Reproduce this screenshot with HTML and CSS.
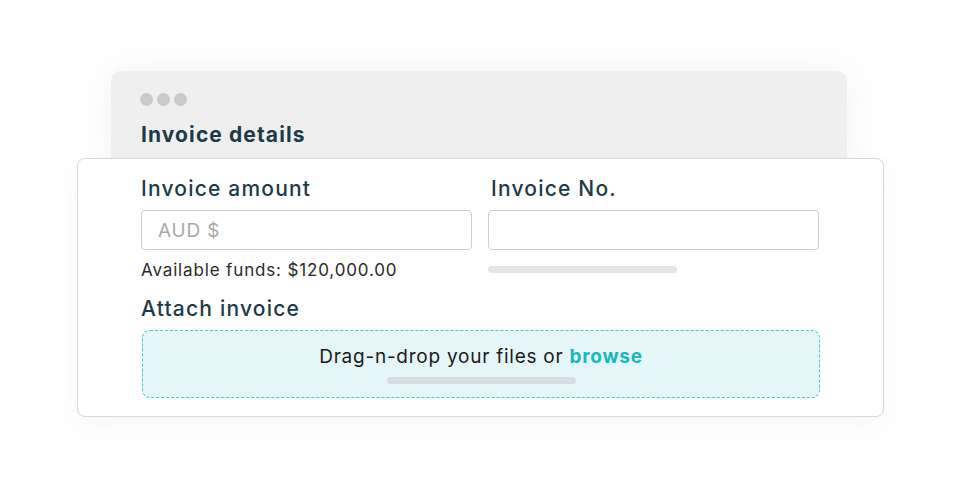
FILE: index.html
```html
<!DOCTYPE html>
<html lang="en">
<head>
<meta charset="utf-8"/>
<meta content="width=device-width, initial-scale=1.0" name="viewport"/>
<title>Invoice details</title>
<link rel="stylesheet" href="styles.css">
</head>
<body>
<div class="stage">
  <div class="window">
    <div class="dots"><span></span><span></span><span></span></div>
    <h2 class="window-title">Invoice details</h2>
  </div>
  <div class="card">
    <div class="form-grid">
      <div class="field">
        <label class="label">Invoice amount</label>
        <div class="input"><span class="placeholder">AUD $</span></div>
        <p class="hint">Available funds: $120,000.00</p>
      </div>
      <div class="field">
        <label class="label">Invoice No.</label>
        <div class="input"></div>
        <div class="skeleton skeleton-hint"></div>
      </div>
    </div>
    <label class="label">Attach invoice</label>
    <div class="dropzone">
      <p>Drag-n-drop your files or <b class="browse">browse</b></p>
      <div class="skeleton skeleton-drop"></div>
    </div>
  </div>
</div>
</body>
</html>
```

FILE: styles.css
```css
* {
  margin: 0;
  padding: 0;
  box-sizing: border-box;
}
body {
  font-family: Inter, 'Noto Sans', sans-serif;
  background: white;
  width: 960px;
  height: 480px;
  overflow: hidden;
}
.stage {
  padding: 71px 0 0 77px;
  width: 884px;
}
.window {
  margin-left: 34px;
  width: 736px;
  height: 100px;
  background: #efefef;
  border-radius: 10px;
  box-shadow: 0 0 40px rgba(0,0,0,0.06);
  padding: 22px 30px 0 29px;
}
.dots {
  display: flex;
  gap: 4px;
}
.dots span {
  width: 13px;
  height: 13px;
  border-radius: 50%;
  background: #cacaca;
}
.window-title {
  margin-top: 16px;
  padding-left: 1px;
  font-size: 21px;
  line-height: 26px;
  font-weight: 700;
  letter-spacing: 1.1px;
  color: #1c3a48;
}
.card {
  position: relative;
  margin-top: -13px;
  width: 807px;
  height: 259px;
  background: white;
  border: 1px solid #d8d8d8;
  border-radius: 8px;
  padding: 16px 63px 0 63px;
  box-shadow: 0 10px 30px rgba(0,0,0,0.04);
}
.form-grid {
  display: grid;
  grid-template-columns: 331px 331px;
  gap: 16px;
}
.label {
  display: block;
  font-size: 21px;
  font-weight: 500;
  letter-spacing: 1.2px;
  color: #1c3a48;
  line-height: 28px;
}
.input {
  margin-top: 7px;
  height: 40px;
  border: 1px solid #cfcfcf;
  border-radius: 4px;
  padding: 0 16px;
  display: flex;
  align-items: center;
}
.placeholder {
  font-size: 19px;
  letter-spacing: 0.8px;
  color: #a9a9a9;
}
.hint {
  margin-top: 9px;
  font-size: 17px;
  letter-spacing: 0.85px;
  color: #2a2a2a;
  line-height: 22px;
}
.field:first-child + .field .label {
  padding-left: 3px;
}
.skeleton {
  height: 7px;
  border-radius: 4px;
  background: #e5e5e5;
}
.skeleton-hint {
  margin-top: 16px;
  width: 189px;
}
.form-grid + .label {
  margin-top: 14px;
}
.dropzone {
  margin-top: 7px;
  width: 678px;
  height: 68px;
  margin-left: 1px;
  background: #e5f6f9;
  border: 1px dashed #3fcad3;
  border-radius: 8px;
  display: flex;
  flex-direction: column;
  align-items: center;
  padding-top: 14px;
}
.dropzone p {
  font-size: 19px;
  letter-spacing: 0.75px;
  color: #1a1a1a;
  line-height: 24px;
}
.browse {
  font-weight: 700;
  color: #18b7c2;
}
.skeleton-drop {
  margin-top: 8px;
  width: 189px;
  background: #d5dfe1;
}
```
